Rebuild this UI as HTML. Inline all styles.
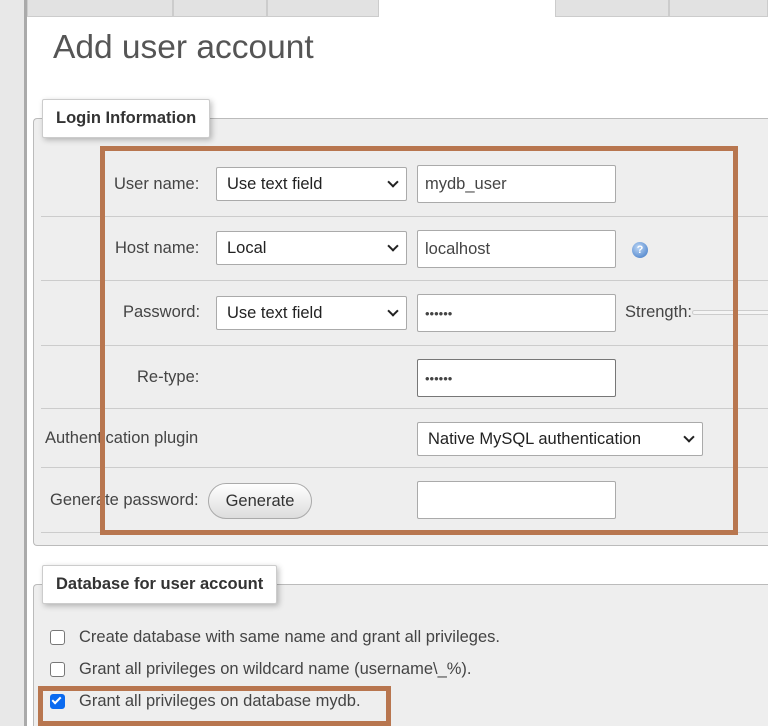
<!DOCTYPE html>
<html><head><style>
*{box-sizing:border-box;margin:0;padding:0}
html,body{width:768px;height:726px;overflow:hidden}
body{background:#fff;font-family:"Liberation Sans",Arial,sans-serif;color:#444;position:relative}
.a{position:absolute}
.tab{position:absolute;top:0;height:17px;background:#e2e2e2;border:1px solid #ccc;border-top:none}
.fs{position:absolute;left:33px;background:#eee;border:1px solid #bbb;border-right:none;border-radius:4px 0 0 4px}
.leg{position:absolute;background:#fff;border:1px solid #ccc;box-shadow:2px 2px 6px rgba(0,0,0,.25);font-weight:bold;font-size:16.5px;color:#333;padding:0 13px;border-radius:2px}
.hr{position:absolute;left:41px;right:0;height:1px;background:#ccc}
.lbl{position:absolute;font-size:16.5px;color:#444}
.sel{position:absolute;height:34px;background:#fff;border:1px solid #aaa;border-radius:2px;font-size:16.5px;color:#222;padding:7px 10px}
.sel:after{content:"";position:absolute;right:9px;top:10px;width:6px;height:6px;border-right:2px solid #222;border-bottom:2px solid #222;transform:rotate(45deg)}
.inp{position:absolute;height:38px;width:199px;background:#fff;border:1px solid #aaa;border-radius:2px;font-size:16.5px;color:#444;padding:9px 7px}
.cb{position:absolute;left:50px;width:15px;height:15px;border:1.5px solid #777;border-radius:3px;background:#fff}
.ct{position:absolute;left:79px;font-size:16.5px;color:#444}
</style></head><body>
<div class="a" style="left:0;top:0;width:25px;height:726px;background:#e8e8e8"></div>
<div class="a" style="left:24px;top:0;width:3px;height:726px;background:#aaa"></div>
<div class="tab" style="left:27px;width:146px"></div>
<div class="tab" style="left:173px;width:94px"></div>
<div class="tab" style="left:267px;width:112px"></div>
<div class="tab" style="left:555px;width:114px"></div>
<div class="tab" style="left:669px;width:99px"></div>
<div class="a" style="left:53px;top:29px;font-size:33.5px;color:#555">Add user account</div>

<div class="fs" style="top:118px;width:740px;height:428px"></div>
<div class="leg" style="left:42px;top:99px;height:39px;line-height:37px">Login Information</div>
<div class="hr" style="top:216px"></div>
<div class="hr" style="top:280px"></div>
<div class="hr" style="top:345px"></div>
<div class="hr" style="top:408px"></div>
<div class="hr" style="top:467px"></div>
<div class="hr" style="top:532px"></div>

<div class="lbl" style="left:114px;top:175px">User name:</div>
<div class="sel" style="left:216px;top:167px;width:191px">Use text field</div>
<div class="inp" style="left:417px;top:165px">mydb_user</div>

<div class="lbl" style="left:115px;top:239px">Host name:</div>
<div class="sel" style="left:216px;top:231px;width:191px">Local</div>
<div class="inp" style="left:417px;top:230px">localhost</div>
<div class="a" style="left:632px;top:242px;width:16px;height:16px;border-radius:50%;background:radial-gradient(circle at 40% 35%,#bcd6f5,#3a75c4);color:#fff;font-size:11px;font-weight:bold;text-align:center;line-height:16px">?</div>

<div class="lbl" style="left:123px;top:303px">Password:</div>
<div class="sel" style="left:216px;top:296px;width:191px">Use text field</div>
<div class="inp" style="left:417px;top:294px;font-size:13px;padding-top:11px">••••••</div>
<div class="lbl" style="left:625px;top:303px">Strength:</div>
<div class="a" style="left:692px;top:310px;width:76px;height:5px;border:1px solid #ccc;border-right:none;border-radius:3px 0 0 3px;background:#f4f4f4"></div>

<div class="lbl" style="left:137px;top:368px">Re-type:</div>
<div class="inp" style="left:417px;top:359px;font-size:13px;padding-top:11px;border-color:#777">••••••</div>

<div class="lbl" style="left:45px;top:429px">Authentication plugin</div>
<div class="sel" style="left:417px;top:422px;width:286px">Native MySQL authentication</div>

<div class="lbl" style="left:50px;top:491px">Generate password:</div>
<div class="a" style="left:208px;top:483px;width:104px;height:36px;border:1px solid #aaa;border-radius:18px;background:linear-gradient(#fff,#ddd);font-size:16.5px;color:#333;text-align:center;line-height:34px">Generate</div>
<div class="inp" style="left:417px;top:481px"></div>

<div class="a" style="left:100px;top:146px;width:638px;height:389px;border:5px solid #b8764f"></div>

<div class="fs" style="top:584px;width:740px;height:160px"></div>
<div class="leg" style="left:42px;top:565px;height:39px;line-height:37px">Database for user account</div>
<div class="cb" style="top:630px"></div>
<div class="ct" style="top:628px">Create database with same name and grant all privileges.</div>
<div class="cb" style="top:662px"></div>
<div class="ct" style="top:660px">Grant all privileges on wildcard name (username\_%).</div>
<div class="cb" style="top:694px;background:#0b6bf0;border-color:#0b6bf0"><div style="position:absolute;left:3px;top:0px;width:5px;height:9px;border-right:2px solid #fff;border-bottom:2px solid #fff;transform:rotate(45deg)"></div></div>
<div class="ct" style="top:692px">Grant all privileges on database mydb.</div>
<div class="a" style="left:38px;top:686px;width:353px;height:40px;border:5px solid #b8764f"></div>
</body></html>
